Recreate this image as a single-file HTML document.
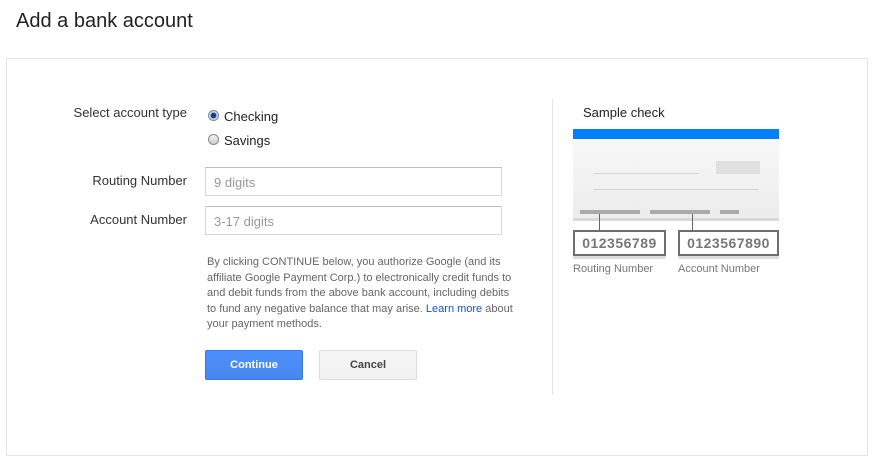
<!DOCTYPE html>
<html><head><style>
*{margin:0;padding:0;box-sizing:border-box}
body{width:893px;height:476px;background:#fff;font-family:"Liberation Sans",Arial,sans-serif;position:relative;overflow:hidden;color:#222}
.a{position:absolute}
h1{position:absolute;left:16px;top:10px;font-size:20px;font-weight:normal;color:#222}
.panel{position:absolute;left:6px;top:58px;width:862px;height:398px;border:1px solid #e5e5e5}
.lbl{font-size:13px;color:#333;text-align:right;width:140px}
.inp{border:1px solid #d9d9d9;border-top-color:#c0c0c0;height:29px;width:297px;font-size:13px;color:#999;padding:7px 8px}
.radio{width:11px;height:11px;border-radius:50%;border:1px solid #888;background:linear-gradient(#f5f5f5,#ccc)}
.txt{font-size:11px;color:#666;line-height:15.5px;width:306px}
a{color:#15c;text-decoration:none}
.btn{font-size:11px;font-weight:bold;text-align:center;line-height:28px;border-radius:2px;height:30px}
.box{border:2px solid #6e6e6e;background:#fff;font-size:14px;font-weight:bold;color:#777;text-align:center;line-height:22px;letter-spacing:0.5px;height:26px}
</style></head><body>
<h1>Add a bank account</h1>
<div class="panel"></div>
<div class="a lbl" style="left:47px;top:105px">Select account type</div>
<div class="a radio" style="left:208px;top:110px;background:radial-gradient(circle,#1a3f7a 0 2.5px,#9ec4ef 3px,#e8f0fa 5px)"></div>
<div class="a" style="left:224px;top:109px;font-size:13px;color:#222">Checking</div>
<div class="a radio" style="left:208px;top:134px"></div>
<div class="a" style="left:224px;top:133px;font-size:13px;color:#222">Savings</div>
<div class="a lbl" style="left:47px;top:173px">Routing Number</div>
<div class="a inp" style="left:205px;top:167px">9 digits</div>
<div class="a lbl" style="left:47px;top:212px">Account Number</div>
<div class="a inp" style="left:205px;top:206px">3-17 digits</div>
<div class="a txt" style="left:207px;top:255px">By clicking CONTINUE below, you authorize Google (and its affiliate Google Payment Corp.) to electronically credit funds to and debit funds from the above bank account, including debits to fund any negative balance that may arise. <a>Learn more</a> about your payment methods.</div>
<div class="a btn" style="left:205px;top:350px;width:98px;background:linear-gradient(#4d90fe,#4787ed);border:1px solid #3079ed;color:#fff">Continue</div>
<div class="a btn" style="left:319px;top:350px;width:98px;background:linear-gradient(#f5f5f5,#f1f1f1);border:1px solid #dcdcdc;color:#444">Cancel</div>
<div class="a" style="left:552px;top:99px;width:1px;height:296px;background:#e5e5e5"></div>
<div class="a" style="left:583px;top:105px;font-size:13px;color:#222">Sample check</div>
<div class="a" style="left:573px;top:129px;width:206px;height:10px;background:#0080ff"></div>
<div class="a" style="left:573px;top:139px;width:206px;height:80px;background:linear-gradient(#f8f8f8,#ececec)"></div>
<div class="a" style="left:573px;top:218px;width:206px;height:3px;background:#d8d8d8"></div>
<div class="a" style="left:716px;top:161px;width:44px;height:13px;background:#e0e0e0"></div>
<div class="a" style="left:593px;top:173px;width:106px;height:1px;background:#d4d4d4"></div>
<div class="a" style="left:593px;top:189px;width:166px;height:1px;background:#d4d4d4"></div>
<div class="a" style="left:580px;top:210px;width:60px;height:4px;background:#aaa"></div>
<div class="a" style="left:650px;top:210px;width:60px;height:4px;background:#aaa"></div>
<div class="a" style="left:720px;top:210px;width:19px;height:4px;background:#aaa"></div>
<div class="a" style="left:599px;top:214px;width:1px;height:17px;background:#666"></div>
<div class="a" style="left:692px;top:214px;width:1px;height:17px;background:#666"></div>
<div class="a" style="left:573px;top:230px;width:93px;height:29px;background:#ddd"></div>
<div class="a" style="left:678px;top:230px;width:101px;height:29px;background:#ddd"></div>
<div class="a box" style="left:573px;top:230px;width:93px">012356789</div>
<div class="a box" style="left:678px;top:230px;width:101px">0123567890</div>
<div class="a" style="left:573px;top:263px;font-size:11px;color:#777">Routing Number</div>
<div class="a" style="left:678px;top:263px;font-size:11px;color:#777">Account Number</div>
</body></html>
